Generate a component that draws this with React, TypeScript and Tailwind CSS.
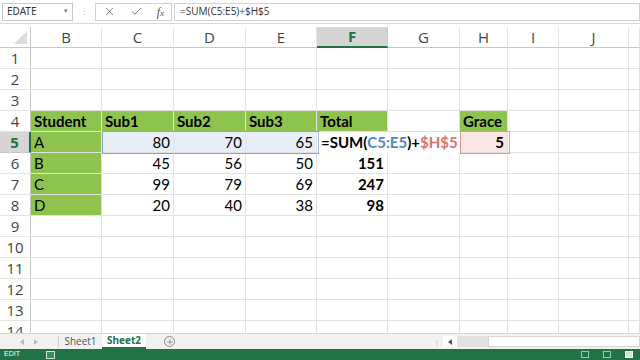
import { X, Check, Plus } from "lucide-react";

const COLS = ["B", "C", "D", "E", "F", "G", "H", "I", "J", "K"];
const GREEN = "bg-[#8ec44e] border-[#8ec44e]";

type CellSpec = { text?: string; cls?: string };

const data: Record<string, CellSpec> = {
  B4: { text: "Student", cls: `${GREEN} font-bold` },
  C4: { text: "Sub1", cls: `${GREEN} font-bold` },
  D4: { text: "Sub2", cls: `${GREEN} font-bold` },
  E4: { text: "Sub3", cls: `${GREEN} font-bold` },
  F4: { text: "Total", cls: `${GREEN} font-bold` },
  H4: { text: "Grace", cls: `${GREEN} font-bold` },
  B5: { text: "A", cls: GREEN },
  B6: { text: "B", cls: GREEN },
  B7: { text: "C", cls: GREEN },
  B8: { text: "D", cls: GREEN },
  C5: { text: "80", cls: "text-right bg-[#e7eef8]" },
  D5: { text: "70", cls: "text-right bg-[#e7eef8]" },
  E5: { text: "65", cls: "text-right bg-[#e7eef8]" },
  H5: { text: "5", cls: "text-right font-bold bg-[#fbe6e4]" },
  C6: { text: "45", cls: "text-right" },
  D6: { text: "56", cls: "text-right" },
  E6: { text: "50", cls: "text-right" },
  F6: { text: "151", cls: "text-right font-bold" },
  C7: { text: "99", cls: "text-right" },
  D7: { text: "79", cls: "text-right" },
  E7: { text: "69", cls: "text-right" },
  F7: { text: "247", cls: "text-right font-bold" },
  C8: { text: "20", cls: "text-right" },
  D8: { text: "40", cls: "text-right" },
  E8: { text: "38", cls: "text-right" },
  F8: { text: "98", cls: "text-right font-bold" },
};

function FormulaBar() {
  return (
    <div className="h-[24px] flex items-center border-b border-[#d8d8d8] bg-white text-[10px] text-[#333]">
      <div className="ml-[2px] w-[71px] h-[18px] border border-[#c8c8c8] flex items-center justify-between px-[4px]">
        <span>EDATE</span>
        <span className="text-[7px] text-[#777]">▾</span>
      </div>
      <div className="w-[22px] flex justify-center text-[#c8c8c8] text-[9px]">⋮</div>
      <div className="w-[77px] h-[18px] border border-[#d0d0d0] flex items-center justify-around text-[#555]">
        <X size={13} strokeWidth={1.3} />
        <Check size={13} strokeWidth={1.5} />
        <span className="font-['Liberation_Serif',serif] italic text-[12px]">
          f<span className="text-[9px]">x</span>
        </span>
      </div>
      <div className="ml-[2px] flex-1 h-[18px] border border-[#d0d0d0] flex items-center pl-[5px] font-['Open_Sans',sans-serif]">
        =SUM(C5:E5)+$H$5
      </div>
    </div>
  );
}

function Sheet() {
  const rows = Array.from({ length: 14 }, (_, i) => i + 1);
  return (
    <div className="relative h-[306px] overflow-hidden font-['Lato',sans-serif]">
      <div className="grid grid-cols-[31px_71px_72px_72px_71px_71px_72px_48px_51px_70px_1fr] auto-rows-[21px]">
        <div className="relative border-r border-b border-[#c8c8c8] bg-white">
          <div className="absolute right-[3px] bottom-[3px] w-0 h-0 border-l-[13px] border-l-transparent border-b-[13px] border-b-[#dcdcdc]" />
        </div>
        {COLS.map((c) =>
          c === "F" ? (
            <div key={c} className="flex items-center justify-center bg-[#d5d5d5] border-b-2 border-b-[#217346] border-r border-r-[#c8c8c8] text-[15px] font-bold text-[#217346] font-['Open_Sans',sans-serif]">
              {c}
            </div>
          ) : (
            <div key={c} className="flex items-center justify-center bg-white border-b border-b-[#c8c8c8] border-r border-r-[#e4e4e4] text-[15px] text-[#444] font-['Open_Sans',sans-serif]">
              {c === "K" ? "" : c}
            </div>
          )
        )}
        {rows.map((r) => (
          <Row key={r} r={r} />
        ))}
      </div>
      {/* selection C5:E5 */}
      <div className="absolute left-[102px] top-[104px] w-[217px] h-[23px] border-[1.5px] border-[#7fa6d9] pointer-events-none" />
      {/* edit box F5 */}
      <div className="absolute left-[318px] top-[105px] w-[142px] h-[21px] bg-white border-l border-[#9fbde6] flex items-center pl-[2px] text-[15px] font-bold whitespace-nowrap">
        <span>=SUM(</span>
        <span className="text-[#4f86c6]">C5:E5</span>
        <span>)+</span>
        <span className="text-[#e0706a]">$H$5</span>
      </div>
      {/* reference box H5 */}
      <div className="absolute left-[460px] top-[104px] w-[50px] h-[23px] border-[1.5px] border-[#e8938e] pointer-events-none" />
    </div>
  );
}

function Row({ r }: { r: number }) {
  const active = r === 5;
  return (
    <>
      <div
        className={
          active
            ? "flex items-center justify-center bg-[#d5d5d5] border-r-2 border-r-[#217346] border-b border-b-[#c8c8c8] text-[15px] font-bold text-[#217346] font-['Open_Sans',sans-serif]"
            : "flex items-center justify-center bg-white border-r border-r-[#c8c8c8] border-b border-b-[#e4e4e4] text-[15px] text-[#444] font-['Open_Sans',sans-serif]"
        }
      >
        {r}
      </div>
      {COLS.map((c) => {
        const spec = data[c + r];
        return (
          <div
            key={c}
            className={`border-r border-b border-[#e1e1e1] px-[3px] text-[15px] leading-[20px] whitespace-nowrap overflow-hidden text-black ${spec?.cls ?? ""}`}
          >
            {spec?.text}
          </div>
        );
      })}
    </>
  );
}

function TabBar() {
  return (
    <div className="h-[16px] flex items-stretch bg-[#f1f1f1] border-t border-[#d4d4d4] text-[10px] font-['Open_Sans',sans-serif]">
      <div className="w-[58px] flex items-center justify-center gap-[10px]">
        <svg width="4" height="6" viewBox="0 0 4 6"><path d="M4 0 L0 3 L4 6 Z" fill="#b8b8b8" /></svg>
        <svg width="4" height="6" viewBox="0 0 4 6"><path d="M0 0 L4 3 L0 6 Z" fill="#b8b8b8" /></svg>
      </div>
      <div className="w-px bg-[#cfcfcf] my-[2px]" />
      <div className="w-[43px] flex items-center justify-center text-[#555]">Sheet1</div>
      <div className="w-[44px] flex items-center justify-center bg-white font-bold text-[#217346] border-b-2 border-[#217346]">
        Sheet2
      </div>
      <div className="w-[47px] flex items-center justify-center">
        <div className="w-[11px] h-[11px] rounded-full border border-[#888] flex items-center justify-center text-[#666]">
          <Plus size={8} strokeWidth={2} />
        </div>
      </div>
      <div className="w-[240px]" />
      <div className="w-[10px] flex items-center text-[#aaa] text-[8px]">⋮</div>
      <div className="w-[14px] my-[2px] bg-white flex items-center justify-center">
        <svg width="4" height="6" viewBox="0 0 4 6"><path d="M4 0 L0 3 L4 6 Z" fill="#555" /></svg>
      </div>
      <div className="w-[31px] my-[2px] bg-[#e2e2e2]" />
      <div className="flex-1 my-[2px] bg-white border border-[#d6d6d6]" />
    </div>
  );
}

function StatusBar() {
  return (
    <div className="h-[11px] bg-[#217346] flex items-center px-[4px] text-[7px] text-white font-['Liberation_Sans',sans-serif]">
      <span>EDIT</span>
      <div className="ml-[26px] w-[9px] h-[8px] border border-[#cfe3d6] bg-[#3f8a5e]" />
      <div className="flex-1" />
      <div className="flex gap-[14px] items-center mr-[3px]">
        <div className="w-[8px] h-[7px] border border-[#9cc6ad]" />
        <div className="w-[8px] h-[7px] border border-[#9cc6ad]" />
        <div className="w-[8px] h-[7px] border border-white bg-[#cfe3d6]" />
      </div>
    </div>
  );
}

export default function App() {
  return (
    <div className="w-[640px] h-[360px] bg-white overflow-hidden flex flex-col">
      <FormulaBar />
      <div className="h-[3px] bg-white" />
      <Sheet />
      <TabBar />
      <StatusBar />
    </div>
  );
}
